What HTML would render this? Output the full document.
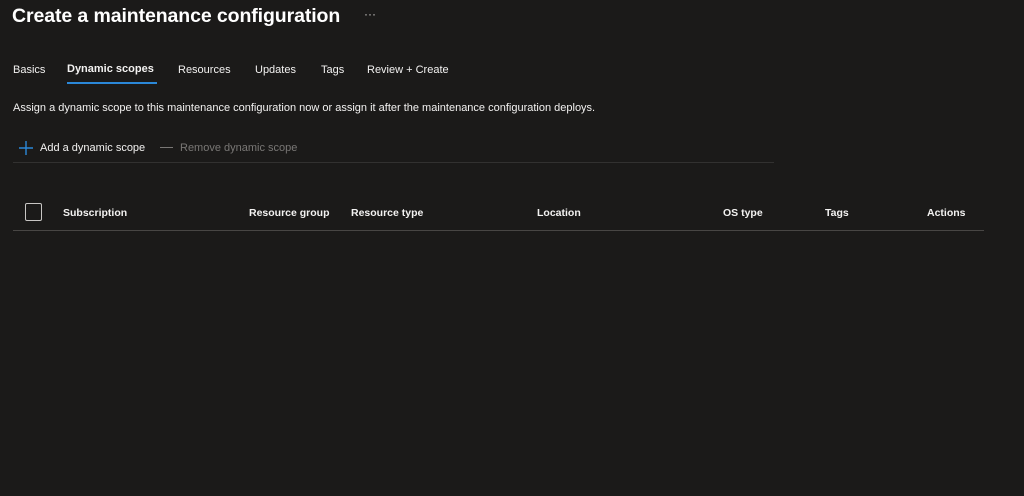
<!DOCTYPE html>
<html><head><style>
body{margin:0;width:1024px;height:496px;background:#1b1a19;font-family:"Liberation Sans",sans-serif;color:#fff;position:relative;overflow:hidden}
.a{position:absolute;white-space:nowrap}
.t{font-size:11px;color:#f3f2f1;top:64px}
.h{font-size:10.5px;font-weight:bold;color:#f3f2f1;top:207px}
</style></head><body>
<div class="a" style="left:12px;top:5px;font-size:19.5px;font-weight:bold;letter-spacing:-0.1px;color:#fff">Create a maintenance configuration</div>
<div class="a" style="left:364px;top:7px;font-size:12px;color:#c8c6c4">···</div>
<div class="a t" style="left:13px">Basics</div>
<div class="a t" style="left:67px;font-weight:bold;top:63px">Dynamic scopes</div>
<div class="a" style="left:67px;top:82px;width:90px;height:2px;background:#2b88d8"></div>
<div class="a t" style="left:178px">Resources</div>
<div class="a t" style="left:255px">Updates</div>
<div class="a t" style="left:321px">Tags</div>
<div class="a t" style="left:367px">Review + Create</div>
<div class="a" style="left:13px;top:102px;font-size:11px;color:#f3f2f1">Assign a dynamic scope to this maintenance configuration now or assign it after the maintenance configuration deploys.</div>
<svg class="a" style="left:19px;top:141px" width="14" height="14"><path d="M7 0V14M0 7H14" stroke="#2b88d8" stroke-width="1.4"/></svg>
<div class="a" style="left:40px;top:142px;font-size:11px;color:#f3f2f1">Add a dynamic scope</div>
<div class="a" style="left:160px;top:147px;width:13px;height:1px;background:#797775"></div>
<div class="a" style="left:180px;top:142px;font-size:11px;color:#797775">Remove dynamic scope</div>
<div class="a" style="left:13px;top:162px;width:761px;height:1px;background:#323130"></div>
<div class="a" style="left:25px;top:203px;border:1px solid #c8c6c4;border-radius:2px;box-sizing:border-box;width:17px;height:18px"></div>
<div class="a h" style="left:63px">Subscription</div>
<div class="a h" style="left:249px">Resource group</div>
<div class="a h" style="left:351px">Resource type</div>
<div class="a h" style="left:537px">Location</div>
<div class="a h" style="left:723px">OS type</div>
<div class="a h" style="left:825px">Tags</div>
<div class="a h" style="left:927px">Actions</div>
<div class="a" style="left:13px;top:230px;width:971px;height:1px;background:#484644"></div>
</body></html>
